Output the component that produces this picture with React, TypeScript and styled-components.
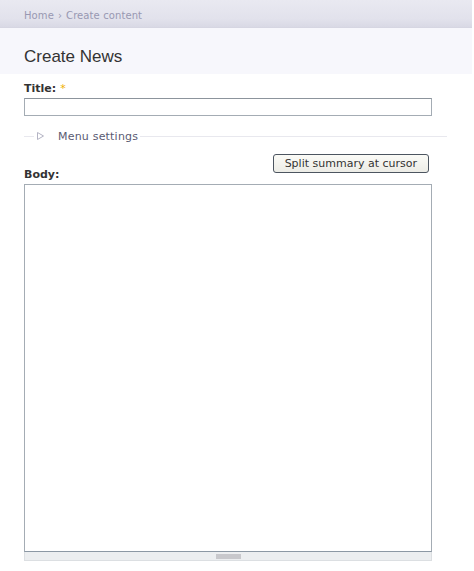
import styled, { createGlobalStyle } from 'styled-components';

const GlobalStyle = createGlobalStyle`
  html, body {
    margin: 0;
    padding: 0;
    background: #ffffff;
  }
  body {
    font-family: "DejaVu Sans", Verdana, sans-serif;
    font-size: 11px;
    color: #333;
  }
`;

const Page = styled.div`
  width: 472px;
`;

const Breadcrumb = styled.div`
  height: 28px;
  box-sizing: border-box;
  padding: 10px 0 0 24px;
  background: linear-gradient(to bottom, #e9e9f1 0%, #e2e2ec 70%, #d9d9e5 100%);
  border-bottom: 1px solid #d6d6e2;
  font-size: 10px;
  line-height: 12px;
  color: #9a9ab4;
  letter-spacing: 0.1px;
`;

const Crumb = styled.span`
  color: #9898b2;
`;

const Sep = styled.span`
  margin: 0 4px;
`;

const TitleBar = styled.div`
  height: 46px;
  box-sizing: border-box;
  background: #f7f7fc;
  padding: 19px 0 0 24px;
`;

const Heading = styled.h1`
  margin: 0;
  font-family: "Liberation Sans", Arial, sans-serif;
  font-weight: normal;
  font-size: 17px;
  line-height: 20px;
  color: #333;
`;

const Form = styled.form`
  padding: 8px 0 0 24px;
`;

const Label = styled.label`
  display: block;
  font-weight: bold;
  font-size: 11px;
  line-height: 14px;
  color: #333;
  margin-bottom: 2px;
`;

const Required = styled.span`
  color: #f0b000;
  margin-left: 4px;
  font-weight: normal;
`;

const TextInput = styled.input`
  display: block;
  width: 408px;
  height: 18px;
  box-sizing: border-box;
  border: 1px solid #a4acb4;
  border-top-color: #8c949c;
  padding: 0 3px;
  background: #fff;
  margin: 0;
`;

const Fieldset = styled.div`
  display: flex;
  align-items: center;
  margin-top: 14px;
  width: 423px;
  height: 12px;
`;

const Line = styled.div<{ $w?: number }>`
  height: 1px;
  background: #e8e8ee;
  ${(p) => (p.$w ? `width: ${p.$w}px;` : 'flex: 1;')}
`;

const Legend = styled.span`
  display: flex;
  align-items: center;
  color: #5a5a72;
  font-size: 11px;
  letter-spacing: 0.2px;
  padding-right: 2px;
`;

const Arrow = styled.svg`
  margin: 0 8px 0 0;
`;

const ButtonRow = styled.div`
  display: flex;
  justify-content: flex-end;
  width: 405px;
  margin-top: 12px;
`;

const Button = styled.button`
  height: 19px;
  padding: 0 11px;
  font-family: "DejaVu Sans", Verdana, sans-serif;
  font-size: 11px;
  color: #333;
  background: linear-gradient(to bottom, #fbfbf7, #ecece6);
  border: 1px solid #4c5560;
  border-radius: 3px;
  line-height: 15px;
`;

const BodyLabel = styled(Label)`
  margin-top: -5px;
  margin-bottom: 2px;
`;

const Editor = styled.div`
  width: 408px;
`;

const TextArea = styled.textarea`
  display: block;
  width: 408px;
  height: 368px;
  box-sizing: border-box;
  border: 1px solid #a4acb4;
  border-bottom-color: #8c98a4;
  margin: 0;
  resize: none;
  background: #fff;
`;

const Grippie = styled.div`
  height: 9px;
  box-sizing: border-box;
  background: #eceef0;
  border: 1px solid #dcdfe2;
  border-top: none;
  display: flex;
  justify-content: center;
  align-items: center;
`;

const Handle = styled.div`
  width: 25px;
  height: 5px;
  background: #c8c8cc;
`;

export default function App() {
  return (
    <Page>
      <GlobalStyle />
      <Breadcrumb>
        <Crumb>Home</Crumb>
        <Sep>›</Sep>
        <Crumb>Create content</Crumb>
      </Breadcrumb>
      <TitleBar>
        <Heading>Create News</Heading>
      </TitleBar>
      <Form onSubmit={(e) => e.preventDefault()}>
        <Label>
          Title:<Required>*</Required>
        </Label>
        <TextInput type="text" />
        <Fieldset>
          <Line $w={10} />
          <Legend>
            <Arrow width="16" height="10" viewBox="0 0 16 10">
              <path d="M3.5 1.5 L9.5 5 L3.5 8.5 Z" fill="none" stroke="#b4b4c4" strokeWidth="1" />
            </Arrow>
            Menu settings
          </Legend>
          <Line />
        </Fieldset>
        <ButtonRow>
          <Button type="button">Split summary at cursor</Button>
        </ButtonRow>
        <BodyLabel>Body:</BodyLabel>
        <Editor>
          <TextArea />
          <Grippie>
            <Handle />
          </Grippie>
        </Editor>
      </Form>
    </Page>
  );
}
